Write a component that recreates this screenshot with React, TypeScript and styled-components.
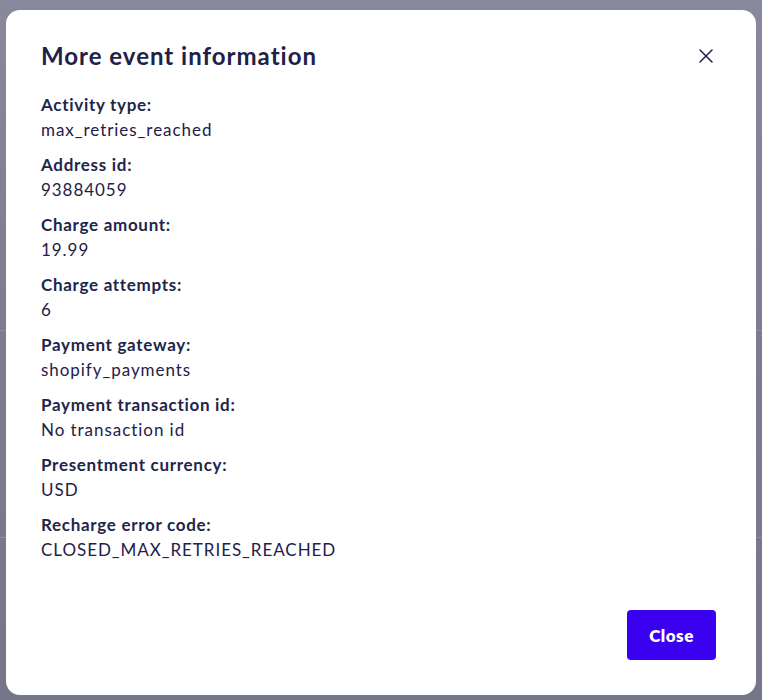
import React from "react";
import styled, { createGlobalStyle } from "styled-components";

const Global = createGlobalStyle`
  html, body { margin: 0; padding: 0; }
  body { font-family: "Lato", "Noto Sans", sans-serif; }
  * { box-sizing: border-box; }
`;

const Backdrop = styled.div`
  width: 762px;
  height: 700px;
  background: linear-gradient(180deg, #88899c 0%, #7d7e92 40%, #75768a 100%);
  display: flex;
  align-items: flex-start;
  justify-content: center;
  padding-top: 10px;
  position: relative;
  overflow: hidden;
`;

const Divider = styled.div<{ $top: number }>`
  position: absolute;
  left: 0;
  right: 0;
  top: ${(p) => p.$top}px;
  height: 1px;
  background: #8e8fa2;
`;

const Modal = styled.div`
  position: relative;
  width: 750px;
  height: 685px;
  background: #ffffff;
  border-radius: 14px;
  padding: 30px 40px 35px 35px;
  display: flex;
  flex-direction: column;
  color: #1e2148;
`;

const Header = styled.div`
  display: flex;
  align-items: center;
  justify-content: space-between;
`;

const Title = styled.h2`
  margin: 0;
  font-size: 24px;
  line-height: 32px;
  font-weight: 700;
  letter-spacing: 1px;
`;

const CloseIcon = styled.button`
  border: none;
  background: none;
  padding: 0;
  width: 20px;
  height: 20px;
  display: flex;
  align-items: center;
  justify-content: center;
  color: #1e2148;
  cursor: pointer;
`;

const List = styled.dl`
  margin: 20px 0 0;
  display: flex;
  flex-direction: column;
  gap: 10px;
`;

const Item = styled.div`
  display: flex;
  flex-direction: column;
`;

const Label = styled.dt`
  font-size: 17px;
  line-height: 25px;
  font-weight: 700;
  letter-spacing: 0.7px;
  color: #22254a;
`;

const Value = styled.dd`
  margin: 0;
  font-size: 17px;
  line-height: 25px;
  font-weight: 400;
  color: #1e2148;
  letter-spacing: 0.95px;
`;

const Footer = styled.div`
  margin-top: auto;
  display: flex;
  justify-content: flex-end;
`;

const Button = styled.button`
  width: 89px;
  height: 50px;
  border: none;
  border-radius: 4px;
  background: #3a00f0;
  color: #ffffff;
  font-family: "Lato", "Noto Sans", sans-serif;
  font-size: 17px;
  font-weight: 800;
  letter-spacing: 0.5px;
  cursor: pointer;
`;

const rows: [string, string][] = [
  ["Activity type:", "max_retries_reached"],
  ["Address id:", "93884059"],
  ["Charge amount:", "19.99"],
  ["Charge attempts:", "6"],
  ["Payment gateway:", "shopify_payments"],
  ["Payment transaction id:", "No transaction id"],
  ["Presentment currency:", "USD"],
  ["Recharge error code:", "CLOSED_MAX_RETRIES_REACHED"],
];

export default function App() {
  return (
    <>
      <Global />
      <Backdrop>
        <Divider $top={330} />
        <Divider $top={537} />
        <Modal>
          <Header>
            <Title>More event information</Title>
            <CloseIcon aria-label="Close">
              <svg width="14" height="14" viewBox="0 0 14 14">
                <path d="M1 1L13 13M13 1L1 13" stroke="currentColor" strokeWidth="1.5" strokeLinecap="round" />
              </svg>
            </CloseIcon>
          </Header>
          <List>
            {rows.map(([l, v]) => (
              <Item key={l}>
                <Label>{l}</Label>
                <Value>{v}</Value>
              </Item>
            ))}
          </List>
          <Footer>
            <Button>Close</Button>
          </Footer>
        </Modal>
      </Backdrop>
    </>
  );
}
